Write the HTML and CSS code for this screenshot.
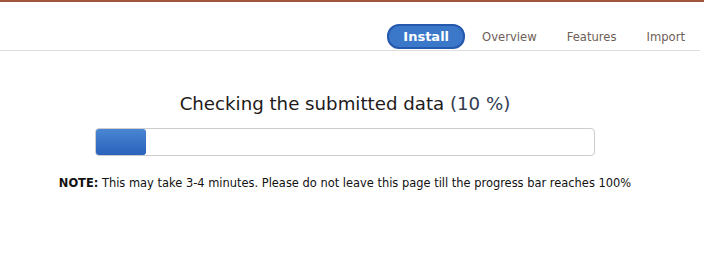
FILE: index.html
```html
<!DOCTYPE html>
<html lang="en">
<head>
<meta charset="UTF-8">
<title>Install</title>
<link rel="stylesheet" href="styles.css">
</head>
<body>
<div class="page">
  <div class="header">
    <ul class="nav">
      <li><a class="active" href="#">Install</a></li>
      <li><a href="#">Overview</a></li>
      <li><a href="#">Features</a></li>
      <li><a href="#">Import</a></li>
    </ul>
  </div>
  <div class="content">
    <h2 class="title">Checking the submitted data <span class="percent">(10 %)</span></h2>
    <div class="progress">
      <div class="progress-fill" style="width: 10%"></div>
    </div>
    <p class="note"><b>NOTE:</b> This may take 3-4 minutes. Please do not leave this page till the progress bar reaches 100%</p>
  </div>
</div>
</body>
</html>
```

FILE: styles.css
```css
body {
  margin: 0;
  padding: 0;
  background: #fff;
  font-family: "DejaVu Sans", Verdana, sans-serif;
  border-top: 2px solid #a0553f;
}
.page {
  width: 700px;
}
.header {
  border-bottom: 1px solid #dedede;
  padding: 22px 0 1px;
}
.nav {
  list-style: none;
  margin: 0;
  padding: 0;
  display: flex;
  justify-content: flex-end;
  align-items: center;
}
.nav a {
  display: block;
  font-size: 11.6px;
  color: #6e6058;
  text-decoration: none;
  padding: 5px 15px;
}
.nav a.active {
  background: #3b78c9;
  border: 2px solid #2459ad;
  border-radius: 12px;
  color: #fff;
  font-weight: bold;
  font-size: 13px;
  padding: 3px 14px;
  margin-right: 2px;
}
.content {
  width: 690px;
  text-align: center;
}
.title {
  font-size: 18.2px;
  font-weight: normal;
  color: #221a1a;
  margin: 42px 0 14px;
}
.percent {
  color: #343c52;
}
.progress {
  width: 498px;
  height: 26px;
  margin: 0 auto;
  border: 1px solid #cccccc;
  border-radius: 4px;
  text-align: left;
}
.progress-fill {
  height: 100%;
  background: linear-gradient(#4a86d3, #3570c4 60%, #2a62bb);
  border-radius: 3px;
}
.note {
  font-size: 11.45px;
  color: #111;
  margin: 20px 0 0;
}
```
